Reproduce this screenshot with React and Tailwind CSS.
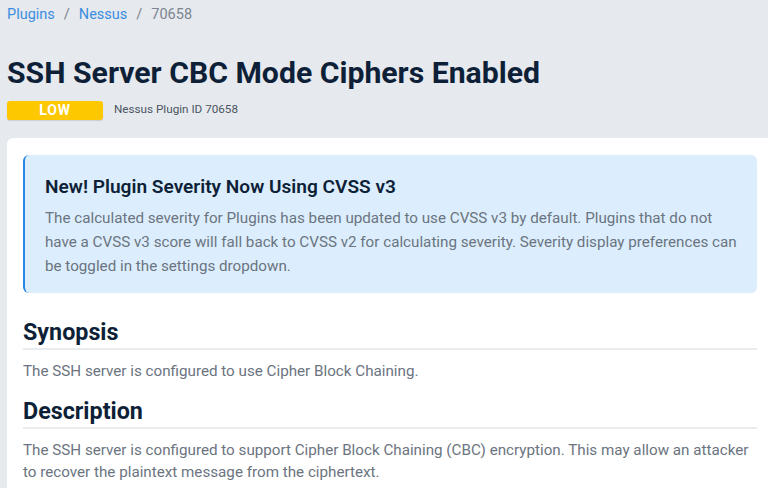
import React from 'react';

function Breadcrumbs() {
  return (
    <nav className="flex items-center gap-[9px] text-[14.5px] leading-none">
      <a href="#" className="text-[#3b8de0]">Plugins</a>
      <span className="text-[#7c8591]">/</span>
      <a href="#" className="text-[#3b8de0]">Nessus</a>
      <span className="text-[#7c8591]">/</span>
      <span className="text-[#7c8591]">70658</span>
    </nav>
  );
}

// one paragraph line per entry, so copy wraps where the design expects
function Lines({ lines }) {
  return lines.map((line) => (
    <span key={line} className="block whitespace-nowrap">
      {line}
    </span>
  ));
}

function Section({ title, lines }) {
  return (
    <section>
      <h2 className="text-[23.3px] font-bold text-[#0e1f38] leading-[30px] pb-px border-b-2 border-[#e9ecef]">
        {title}
      </h2>
      <p className="pt-[10px] text-[15.2px] leading-[22px] text-[#6b7480]">
        <Lines lines={lines} />
      </p>
    </section>
  );
}

export default function App() {
  return (
    <div
      className="h-[488px] overflow-hidden bg-[#e6e9ed] pl-[7px]"
      style={{ fontFamily: 'Roboto, "Liberation Sans", sans-serif' }}
    >
      <div className="pt-[8px]">
        <Breadcrumbs />
      </div>

      <h1 className="mt-[33px] text-[30.2px] font-bold leading-[34px] text-[#0e1f38] whitespace-nowrap">
        SSH Server CBC Mode Ciphers Enabled
      </h1>

      <div className="mt-[11px] flex items-center gap-[11px]">
        <span className="w-[96px] h-[19px] rounded-[3px] bg-[#fec800] shadow-[0_1px_1px_rgba(0,0,0,0.12)] text-white text-[14px] font-bold tracking-[0.06em] flex items-center justify-center">
          LOW
        </span>
        <span className="text-[11.7px] text-[#4b5563]">Nessus Plugin ID 70658</span>
      </div>

      <main className="mt-[18px] bg-white rounded-tl-[6px] pl-[16px] pr-[11px] pt-[17px] pb-6">
        <div className="rounded-[6px] border-l-2 border-[#2a86e3] bg-[#dceefd] pl-[20px] pr-4 pt-[19px] pb-[15px]">
          <h3 className="text-[19.1px] font-semibold leading-[26px] text-[#0e1f38]">
            New! Plugin Severity Now Using CVSS v3
          </h3>
          <p className="mt-[6px] text-[15.2px] leading-[24px] text-[#6b7480]">
            <Lines
              lines={[
                'The calculated severity for Plugins has been updated to use CVSS v3 by default. Plugins that do not',
                'have a CVSS v3 score will fall back to CVSS v2 for calculating severity. Severity display preferences can',
                'be toggled in the settings dropdown.',
              ]}
            />
          </p>
        </div>

        <div className="mt-[24px] flex flex-col gap-[14px]">
          <Section title="Synopsis" lines={['The SSH server is configured to use Cipher Block Chaining.']} />
          <Section
            title="Description"
            lines={[
              'The SSH server is configured to support Cipher Block Chaining (CBC) encryption. This may allow an attacker',
              'to recover the plaintext message from the ciphertext.',
            ]}
          />
        </div>
      </main>
    </div>
  );
}
